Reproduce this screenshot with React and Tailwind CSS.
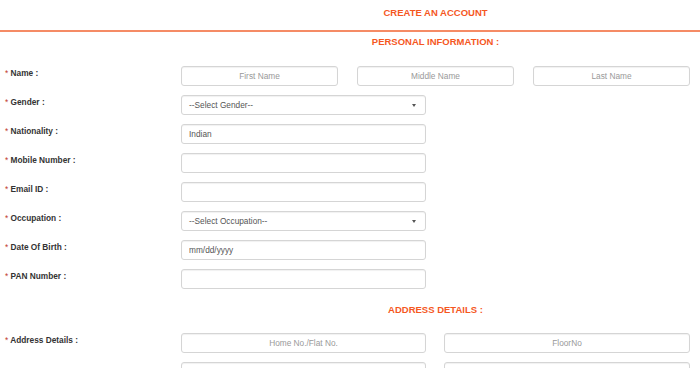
import React from 'react';

const font = { fontFamily: '"Liberation Sans", Arial, sans-serif' };

const Label = ({ children }) => (
  <div className="w-[181px] shrink-0 pl-[5px] pt-[1px] text-[8.3px] font-bold leading-[12px] text-[#333]">
    {children && (
      <>
        <span className="font-normal text-[#c0392b]">*</span> {children} :
      </>
    )}
  </div>
);

const Field = ({ placeholder, value, center, width = 'w-[245px]' }) => (
  <input
    readOnly
    placeholder={placeholder}
    defaultValue={value}
    className={`${width} h-[20px] rounded-[3px] border border-[#d5d5d5] bg-white px-[7px] text-[8.3px] text-[#555] shadow-[inset_0_1px_1px_rgba(0,0,0,0.06)] outline-none placeholder:text-[#999] ${center ? 'text-center placeholder:text-center' : ''}`}
  />
);

const Select = ({ text }) => (
  <div className="relative flex h-[20px] w-[245px] items-center rounded-[3px] border border-[#d5d5d5] bg-white px-[7px] text-[8.3px] text-[#555] shadow-[inset_0_1px_1px_rgba(0,0,0,0.06)]">
    {text}
    <span className="absolute right-[9px] top-[8px] h-0 w-0 border-x-[2.5px] border-t-[3.5px] border-x-transparent border-t-[#555]" />
  </div>
);

const Row = ({ label, children }) => (
  <div className="mb-[9px] flex h-[20px]">
    <Label>{label}</Label>
    <div className="flex w-[509px] justify-between">{children}</div>
  </div>
);

const SectionTitle = ({ children, className }) => (
  <div className={`flex ${className}`}>
    <div className="w-[181px] shrink-0" />
    <div className="w-[509px] text-center text-[9.5px] font-bold leading-[12px] text-[#f5581f]">{children}</div>
  </div>
);

export default function App() {
  return (
    <div className="h-[368px] w-[700px] overflow-hidden bg-white" style={font}>
      <div className="h-[32px] border-b-2 border-[#f58b65] pt-[7px]">
        <SectionTitle>CREATE AN ACCOUNT</SectionTitle>
      </div>
      <SectionTitle className="mt-[4px] mb-[18px]">PERSONAL INFORMATION :</SectionTitle>

      <Row label="Name">
        <Field placeholder="First Name" center width="w-[157px]" />
        <Field placeholder="Middle Name" center width="w-[157px]" />
        <Field placeholder="Last Name" center width="w-[157px]" />
      </Row>
      <Row label="Gender">
        <Select text="--Select Gender--" />
      </Row>
      <Row label="Nationality">
        <Field value="Indian" />
      </Row>
      <Row label="Mobile Number">
        <Field />
      </Row>
      <Row label="Email ID">
        <Field />
      </Row>
      <Row label="Occupation">
        <Select text="--Select Occupation--" />
      </Row>
      <Row label="Date Of Birth">
        <Field value="mm/dd/yyyy" />
      </Row>
      <Row label="PAN Number">
        <Field />
      </Row>

      <SectionTitle className="mt-[15px] mb-[17px]">ADDRESS DETAILS :</SectionTitle>

      <Row label="Address Details">
        <Field placeholder="Home No./Flat No." center />
        <Field placeholder="FloorNo" center width="w-[246px]" />
      </Row>
      <Row>
        <Field />
        <Field width="w-[246px]" />
      </Row>
    </div>
  );
}
